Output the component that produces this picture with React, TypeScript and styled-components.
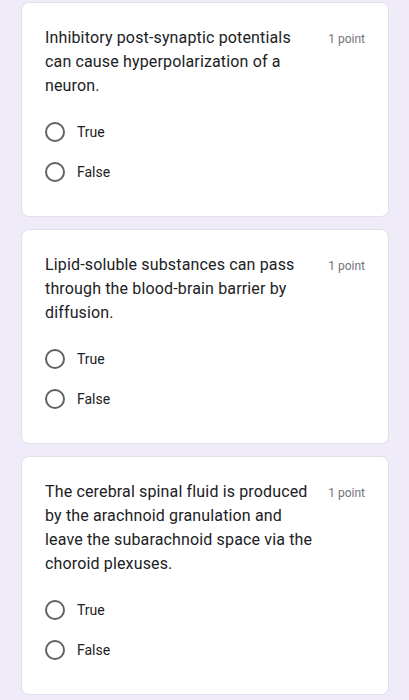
import styled, { createGlobalStyle } from 'styled-components';

const GlobalStyle = createGlobalStyle`
  html, body {
    margin: 0;
    padding: 0;
    background-color: #f0ebf8;
  }
  body {
    font-family: Roboto, 'Liberation Sans', sans-serif;
    color: #202124;
  }
`;

const questions = [
  {
    text: 'Inhibitory post-synaptic potentials can cause hyperpolarization of a neuron.',
    points: 1,
  },
  {
    text: 'Lipid-soluble substances can pass through the blood-brain barrier by diffusion.',
    points: 1,
  },
  {
    text: 'The cerebral spinal fluid is produced by the arachnoid granulation and leave the subarachnoid space via the choroid plexuses.',
    points: 1,
  },
];

const opcoes = ['True', 'False'];

const Page = styled.main`
  display: flex;
  flex-direction: column;
  gap: 12px;
  padding: 2px 20px 5px 21px;
  min-height: 700px;
  box-sizing: border-box;
`;

const Card = styled.section`
  background-color: #ffffff;
  border: 1px solid #e3dfea;
  border-radius: 8px;
  padding: 23px;
`;

const Header = styled.div`
  display: flex;
  align-items: flex-start;
  justify-content: space-between;
`;

const QuestionText = styled.p`
  margin: 0;
  width: 272px;
  font-size: 16px;
  line-height: 24px;
  letter-spacing: 0.15px;
  color: #202124;
`;

const Points = styled.span`
  font-size: 12px;
  line-height: 24px;
  color: #70757a;
  padding-top: 1px;
`;

const Options = styled.div`
  display: flex;
  flex-direction: column;
  gap: 20px;
  margin-top: 24px;
  padding-bottom: 11px;
`;

const Option = styled.label`
  display: flex;
  align-items: center;
  gap: 12px;
  height: 20px;
  font-size: 14px;
  color: #202124;
`;

const Radio = styled.span`
  width: 20px;
  height: 20px;
  box-sizing: border-box;
  border: 2px solid #5f6368;
  border-radius: 50%;
  flex-shrink: 0;
`;

export default function App() {
  return (
    <>
      <GlobalStyle />
      <Page>
        {questions.map((q, index) => (
          <Card key={index}>
            <Header>
              <QuestionText>{q.text}</QuestionText>
              <Points>{q.points} point</Points>
            </Header>
            <Options>
              {opcoes.map((op) => (
                <Option key={op}>
                  <Radio />
                  {op}
                </Option>
              ))}
            </Options>
          </Card>
        ))}
      </Page>
    </>
  );
}
